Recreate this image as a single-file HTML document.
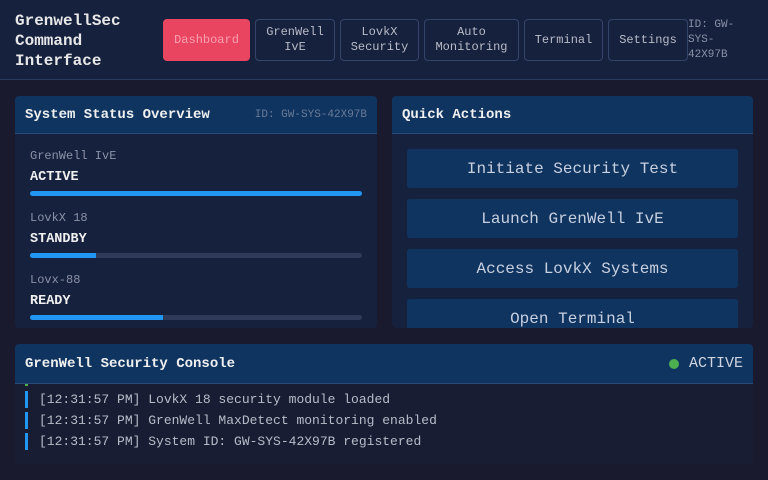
<!DOCTYPE html>
<html><head><style>
*{margin:0;padding:0;box-sizing:border-box}
body{width:768px;height:480px;background:#1a1a2e;font-family:"Courier New",Courier,"Liberation Mono",monospace;color:#e0e0e0;position:relative;overflow:hidden}
.a{position:absolute}
.hdr{left:0;top:0;width:768px;height:80px;background:#16213e;border-bottom:1px solid #2a3a5e}
.logo{left:15px;top:11px;font-weight:bold;font-size:16px;line-height:20px;color:#e8e8e8}
.nb{top:19px;height:42px;border:1px solid #35456a;border-radius:4px;font-size:12px;line-height:15px;color:#b8bcc8;display:flex;align-items:center;justify-content:center;text-align:center}
.nb.act{background:#e94560;border-color:#e94560;color:#f8a0b0}
.panel{background:#16213e;border-radius:4px;overflow:hidden}
.ph{position:absolute;left:0;top:0;right:0;height:38px;background:#0f3460;border-bottom:1px solid #2a4a78;font-weight:bold;font-size:14px;color:#f0f0f0;padding:0 10px;display:flex;align-items:center}
.lbl{font-size:12px;color:#8a92a6}
.st{font-size:13.5px;font-weight:bold;color:#f0f0f0}
.bar{height:5px;background:#2e3a58;border-radius:3px;overflow:hidden}
.bar i{display:block;height:100%;background:#2196f3}
.btn{left:15px;width:331px;height:39px;background:#0f3460;border-radius:3px;font-size:16px;color:#c8d0e0;display:flex;align-items:center;justify-content:center}
.log{left:10px;font-size:13px;color:#b8bcc8;border-left:3px solid #2196f3;padding-left:11px;height:17px;line-height:17px}
</style></head><body>
<div class="a hdr"></div>
<div class="a logo">GrenwellSec<br>Command<br>Interface</div>
<div class="a nb act" style="left:163px;width:87px">Dashboard</div>
<div class="a nb" style="left:255px;width:80px">GrenWell<br>IvE</div>
<div class="a nb" style="left:340px;width:79px">LovkX<br>Security</div>
<div class="a nb" style="left:424px;width:95px">Auto<br>Monitoring</div>
<div class="a nb" style="left:524px;width:79px">Terminal</div>
<div class="a nb" style="left:608px;width:80px">Settings</div>
<div class="a" style="left:688px;top:18px;font-size:11px;line-height:15px;color:#8a92a6">ID: GW-<br>SYS-<br>42X97B</div>

<div class="a panel" style="left:15px;top:96px;width:362px;height:232px">
<div class="ph" style="justify-content:space-between">System Status Overview<span style="font-weight:normal;font-size:11px;color:#6a7a98">ID: GW-SYS-42X97B</span></div>
<div class="a lbl" style="left:15px;top:53px">GrenWell IvE</div>
<div class="a st" style="left:15px;top:74px">ACTIVE</div>
<div class="a bar" style="left:15px;width:332px;top:95px"><i style="width:100%"></i></div>
<div class="a lbl" style="left:15px;top:115px">LovkX 18</div>
<div class="a st" style="left:15px;top:136px">STANDBY</div>
<div class="a bar" style="left:15px;top:157px;width:332px"><i style="width:20%"></i></div>
<div class="a lbl" style="left:15px;top:177px">Lovx-88</div>
<div class="a st" style="left:15px;top:198px">READY</div>
<div class="a bar" style="left:15px;top:219px;width:332px"><i style="width:40%"></i></div>
</div>

<div class="a panel" style="left:392px;top:96px;width:361px;height:232px">
<div class="ph">Quick Actions</div>
<div class="a btn" style="top:53px">Initiate Security Test</div>
<div class="a btn" style="top:103px">Launch GrenWell IvE</div>
<div class="a btn" style="top:153px">Access LovkX Systems</div>
<div class="a btn" style="top:203px">Open Terminal</div>
</div>

<div class="a panel" style="left:15px;top:344px;width:738px;height:120px;background:#181d34">
<div class="ph" style="height:40px;justify-content:space-between">GrenWell Security Console<span style="font-weight:normal;font-size:15px;color:#d0d4e0;display:flex;align-items:center"><i style="display:inline-block;width:10px;height:10px;border-radius:50%;background:#4caf50;margin-right:10px"></i>ACTIVE</span></div>
<div class="a" style="left:10px;top:40px;width:3px;height:2px;background:#4caf50"></div>
<div class="a log" style="top:47px">[12:31:57 PM] LovkX 18 security module loaded</div>
<div class="a log" style="top:68px">[12:31:57 PM] GrenWell MaxDetect monitoring enabled</div>
<div class="a log" style="top:89px">[12:31:57 PM] System ID: GW-SYS-42X97B registered</div>
</div>
</body></html>
